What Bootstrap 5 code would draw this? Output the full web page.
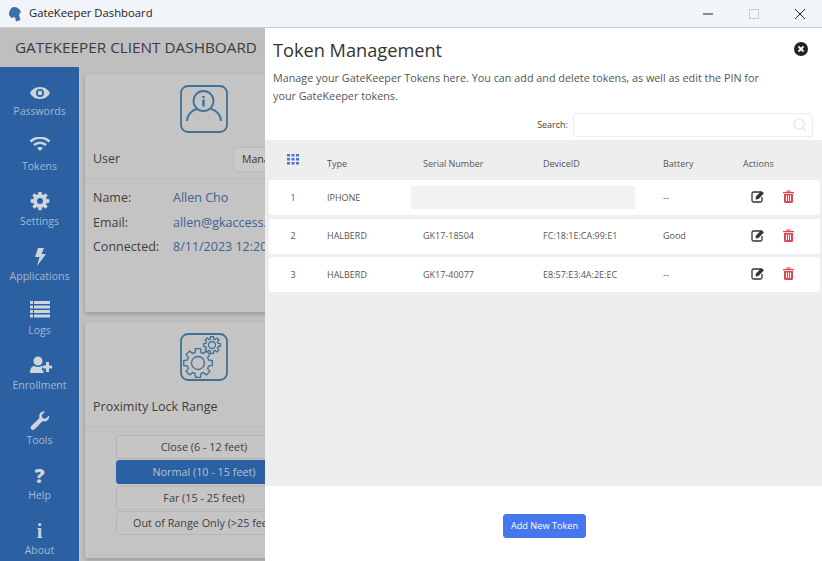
<!DOCTYPE html>
<html lang="en">
<head>
  <meta charset="UTF-8" />
  <meta name="viewport" content="width=device-width, initial-scale=1" />
  <title>GateKeeper Dashboard</title>
  <link href="https://cdn.jsdelivr.net/npm/bootstrap@5.3.3/dist/css/bootstrap.min.css" rel="stylesheet" />
  <style>
    html, body { height: 100%; }
    body {
      overflow: hidden;
      background: #c1c1c1;
      font-family: "Open Sans", "Noto Sans", sans-serif;
      color: #333;
    }
    .win-bar { height: 28px; background: #f1f4f9; border-bottom: 1px solid #c9cbcd; font-size: 11.3px; color: #222; }
    .win-logo { margin: 0 7px 0 8px; }
    .win-btn { width: 46px; position: relative; left: 1px; }
    .app-area { height: 533px; }
    .app-head { height: 39px; padding-left: 15px; font-size: 15.3px; color: #3c3c3c; background: #bfbfbf; }
    .side-menu { width: 79px; background: #2b60a2; }
    .side-item { height: 54.85px; color: #a6b8cf; font-size: 10.5px; line-height: 14px; padding-top: 15px; }
    .side-item svg, .side-glyph { display: block; height: 20px; margin: 0 auto 2px; }
    .side-glyph { color: #ced4db; font-size: 20px; line-height: 20px; font-weight: 800; }
    .glyph-serif { font-family: "Liberation Serif", serif; font-weight: 700; }
    .info-card { width: 238px; background: #c4c4c4; border: 0; border-radius: 2px; box-shadow: 0 2px 5px rgba(0,0,0,.22); }
    .card-one { height: 238px; margin: 7px 0 10px 6px; }
    .card-two { height: 236px; margin-left: 6px; }
    .big-icon { display: block; margin: 11px auto 0; }
    .card-row { padding: 0 8px; height: 38px; font-size: 12.5px; color: #3e3e3e; border-bottom: 1px solid #bcbcbc; }
    .mana-btn { width: 82px; height: 25px; margin-left: auto; background: #c9c9c9; border: 1px solid #bbb; border-radius: 3px; font-size: 10.5px; padding: 4px 8px; color: #333; text-align: left; }
    .facts { padding: 7px 8px 0; font-size: 12.5px; line-height: 24.5px; color: #3e3e3e; }
    .facts span:first-child { display: inline-block; width: 80px; }
    .fact-val { color: #3f6191; white-space: nowrap; }
    .prox-list { width: 176px; margin: 8px 0 0 31px; }
    .prox-opt { height: 24px; margin-bottom: 1.4px; font-size: 10.8px; line-height: 22px; padding: 0; text-align: center; white-space: nowrap; background: #c5c5c5; border: 1px solid #b6b6b6; border-radius: 3px; color: #3e3e3e; }
    .prox-on { background: #2b60a2; border-color: #2b60a2; color: #b4c3d6; }
    .token-panel { top: 0; bottom: 0; left: 265px; right: 0; background: #fff; }
    .panel-title { font-size: 18.2px; line-height: 26px; color: #333; margin: 0; font-weight: 400; }
    .panel-top { padding: 9px 9px 0 8px; }
    .panel-close { margin: 5px 5px 0 0; }
    .panel-desc { margin: 6px 0 0; font-size: 10.8px; line-height: 18px; color: #555; }
    .search-row { height: 24px; margin: 8px 0 3px; font-size: 9px; color: #444; }
    .search-box { width: 240px; height: 24px; margin-left: 5px; border: 1px solid #ececec; border-radius: 3px; padding-right: 5px; }
    .token-area { height: 346px; padding: 0 2px 0 4px; background: #eee; }
    .token-head, .token-row { display: grid; grid-template-columns: 58px 96px 120px 120px 80px 1fr; align-items: center; font-size: 9px; color: #555; }
    .token-head { height: 40px; padding-top: 7px; }
    .head-grid { margin-top: -9px; }
    .token-row { height: 35px; margin-bottom: 3.5px; background: #fff; border-radius: 2px; }
    .col-num { padding-right: 10px; text-align: center; }
    .col-hidden { grid-column: span 2; width: 224px; height: 23px; margin-left: -12px; background: #f2f2f2; }
    .act-gap { gap: 18px; margin: -2px 0 0 8px; }
    .panel-foot { flex: 1; padding: 5px 0 0 2px; }
    .add-btn { width: 83px; height: 24px; padding: 0; font-size: 9.2px; background: #4577ee; border-color: #4577ee; border-radius: 3px; }
  </style>
</head>
<body>
  <!-- window title bar -->
  <div class="win-bar d-flex align-items-center">
    <svg class="win-logo" width="14" height="16" viewBox="0 0 14 16"><path fill="#3d6fa8" d="M6 1c3 0 6 2 7 5l-1 1-1 2 1.500 5-4.500 1.500L7 11 3.500 12 1 9c0-4 2-8 5-8z"/></svg>
    <span>GateKeeper Dashboard</span>
    <div class="ms-auto d-flex align-items-center">
      <div class="win-btn d-flex justify-content-center"><svg width="12" height="12" viewBox="0 0 12 12"><path d="M1 6h10" stroke="#222" fill="none"/></svg></div>
      <div class="win-btn d-flex justify-content-center"><svg width="12" height="12" viewBox="0 0 12 12"><rect x="1.500" y="1.500" width="9" height="9" stroke="#ccc" fill="none"/></svg></div>
      <div class="win-btn d-flex justify-content-center"><svg width="12" height="12" viewBox="0 0 12 12"><path d="M1 1l10 10M11 1L1 11" stroke="#222" fill="none"/></svg></div>
    </div>
  </div>

  <div class="app-area position-relative overflow-hidden">
    <div class="app-head d-flex align-items-center">GATEKEEPER CLIENT DASHBOARD</div>
    <div class="d-flex">
      <nav class="side-menu flex-shrink-0 text-center">
        <div class="side-item">
          <svg width="22" height="20" viewBox="0 -1 22 20"><path fill="#ced4db" d="M11 4C6 4 2.500 7 1 10c1.500 3 5 6 10 6s8.500-3 10-6c-1.500-3-5-6-10-6zm0 10a4 4 0 1 1 0-8 4 4 0 0 1 0 8z"/><circle cx="11" cy="10" r="2.300" fill="#ced4db"/></svg>
          Passwords
        </div>
        <div class="side-item">
          <svg width="22" height="20" viewBox="0 3 22 20"><g fill="none" stroke="#ced4db" stroke-width="2.600"><path d="M1.500 7.500c5.500-5 13.500-5 19 0"/><path d="M5 11c3.500-3 8.500-3 12 0"/></g><path fill="#ced4db" d="M11 17l-3-3c1.700-1.300 4.300-1.300 6 0z"/></svg>
          Tokens
        </div>
        <div class="side-item">
          <svg width="20" height="20" viewBox="0 1 20 20"><path id="sideGear" fill="#ced4db" fill-rule="evenodd" d=""/></svg>
          Settings
        </div>
        <div class="side-item">
          <svg width="14" height="20" viewBox="0 0 14 20"><path fill="#ced4db" d="M5 1h6L8.500 7H13L4 19l2.500-9H2z"/></svg>
          Applications
        </div>
        <div class="side-item">
          <svg width="22" height="20" viewBox="0 2 22 20"><path fill="#ced4db" d="M1 2h3v3H1zm4 0h16v3H5zM1 6.500h3v3H1zm4 0h16v3H5zM1 11h3v3H1zm4 0h16v3H5zM1 15.500h3v3H1zm4 0h16v3H5z"/></svg>
          Logs
        </div>
        <div class="side-item">
          <svg width="24" height="20" viewBox="0 1 24 20"><circle cx="10" cy="6" r="4.500" fill="#ced4db"/><path fill="#ced4db" d="M2 18c0-5 2-7 4.500-7 2 1.200 5 1.200 7 0 1.500 0 2.500.5 3 1.500H14v3h1.500V18z"/><path fill="#ced4db" d="M18 7h3v3.500h3v3h-3V17h-3v-3.500h-3v-3h3z"/></svg>
          Enrollment
        </div>
        <div class="side-item">
          <svg width="20" height="20" viewBox="0 0 20 20"><path fill="#ced4db" d="M19 4.500l-3.500 3.300-3-.8-.8-3L15 .7c-2.800-.9-6 1.300-5.800 4.600 0 .6.100 1.100.3 1.600L1.300 15c-1 1-1 2.400 0 3.300s2.400 1 3.300 0l8.200-8.200c.5.200 1 .3 1.600.3 3.300.2 5.500-3 4.600-5.900z"/></svg>
          Tools
        </div>
        <div class="side-item">
          <span class="side-glyph" aria-hidden="true">?</span>
          Help
        </div>
        <div class="side-item">
          <span class="side-glyph glyph-serif" aria-hidden="true">i</span>
          About
        </div>
      </nav>

      <main class="flex-grow-1">
        <div class="card info-card card-one">
          <svg class="big-icon" width="48" height="48" viewBox="0 0 48 48" fill="none" stroke="#3f7096" stroke-width="1.800">
            <rect x="1" y="1" width="46" height="46" rx="7"/>
            <circle cx="23.500" cy="16" r="10"/>
            <path d="M23.500 11v2M23.500 14.500v7" stroke-width="2.400"/>
            <path d="M7 36c0-6 5-11 10-12M41 36c0-6-5-11-10-12"/>
          </svg>
          <div class="card-row d-flex align-items-center mt-2">User <button class="btn mana-btn">Manage</button></div>
          <div class="facts">
            <div><span>Name:</span><span class="fact-val">Allen Cho</span></div>
            <div><span>Email:</span><span class="fact-val">allen@gkaccess.com</span></div>
            <div><span>Connected:</span><span class="fact-val">8/11/2023 12:20 PM</span></div>
          </div>
        </div>
        <div class="card info-card card-two">
          <svg class="big-icon" width="48" height="48" viewBox="0 0 48 48" fill="none" stroke="#3f7096" stroke-width="1.300">
            <rect x="1" y="1" width="46" height="46" rx="7" stroke-width="1.800"/>
            <path id="gearBig" d=""/><circle cx="18" cy="30" r="6.500"/>
            <path id="gearSmall" d=""/><circle cx="32" cy="12" r="3.500"/>
          </svg>
          <div class="card-row d-flex align-items-center mt-2">Proximity Lock Range</div>
          <div class="prox-list">
            <div class="prox-opt">Close (6 - 12 feet)</div>
            <div class="prox-opt prox-on">Normal (10 - 15 feet)</div>
            <div class="prox-opt">Far (15 - 25 feet)</div>
            <div class="prox-opt">Out of Range Only (&gt;25 feet)</div>
          </div>
        </div>
      </main>
    </div>

    <!-- slide-over panel, sits on top of the dashboard -->
    <aside class="token-panel position-absolute d-flex flex-column">
      <div class="panel-top">
        <div class="d-flex justify-content-between align-items-start">
          <h1 class="panel-title">Token Management</h1>
          <svg class="panel-close" width="14" height="14" viewBox="0 0 14 14"><circle cx="7" cy="7" r="7" fill="#222"/><path d="M4.500 4.500l5 5M9.500 4.500l-5 5" stroke="#fff" stroke-width="1.800"/></svg>
        </div>
        <p class="panel-desc pe-5">Manage your GateKeeper Tokens here. You can add and delete tokens, as well as edit the PIN for your GateKeeper tokens.</p>
        <div class="search-row d-flex align-items-center justify-content-end">
          <span>Search:</span>
          <div class="search-box d-flex align-items-center justify-content-end">
            <svg width="14" height="14" viewBox="0 0 14 14" fill="none" stroke="#e4e4e4" stroke-width="1.200"><circle cx="6" cy="6" r="5"/><path d="M10 10l3 3"/></svg>
          </div>
        </div>
      </div>

      <div class="token-area">
        <div class="token-head">
          <div class="col-num head-grid">
            <svg width="12" height="11" viewBox="0 0 12 11" fill="#4a72d8"><path d="M0 0h3v2.500H0zm4.500 0h3v2.500h-3zM9 0h3v2.500H9zM0 4h3v2.500H0zm4.500 0h3v2.500h-3zM9 4h3v2.500H9zM0 8h3v2.500H0zm4.500 0h3v2.500h-3zM9 8h3v2.500H9z"/></svg>
          </div>
          <div>Type</div><div>Serial Number</div><div>DeviceID</div><div>Battery</div><div>Actions</div>
        </div>
        <div id="tokenRows"></div>
      </div>

      <div class="panel-foot d-flex align-items-center justify-content-center">
        <button class="btn btn-primary add-btn">Add New Token</button>
      </div>
    </aside>
  </div>

  <script>
    const tokens = [
      { type: "IPHONE", serial: "", device: "", battery: "--" },
      { type: "HALBERD", serial: "GK17-18504", device: "FC:18:1E:CA:99:E1", battery: "Good" },
      { type: "HALBERD", serial: "GK17-40077", device: "E8:57:E3:4A:2E:EC", battery: "--" },
    ];

    const editIcon = `<svg width="14" height="13" viewBox="0 0 14 13" fill="none"><path d="M10 2H2.500A1.500 1.500 0 0 0 1 3.500v7A1.500 1.500 0 0 0 2.500 12h7a1.500 1.500 0 0 0 1.500-1.500V7" stroke="#333" stroke-width="1.300"/><path d="M5 6.500L10.500 1 13 3.300 7.500 9l-3 .6z" fill="#333"/></svg>`;
    const trashIcon = `<svg width="11" height="13" viewBox="0 0 11 13" fill="#e8414f"><path d="M3.500 2V.5h4V2H11v1.200H0V2zm1 0h2v-.6h-2z"/><path fill-rule="evenodd" d="M1 4h9v7.500A1.500 1.500 0 0 1 8.500 13h-6A1.500 1.500 0 0 1 1 11.500zm2 1.500V11h1V5.500zm2 0V11h1V5.500zm2 0V11h1V5.500z"/></svg>`;

    document.getElementById("tokenRows").innerHTML = tokens.map((t, i) => `
      <div class="token-row">
        <div class="col-num">${i + 1}</div>
        <div>${t.type}</div>
        ${t.serial ? `<div>${t.serial}</div><div>${t.device}</div>` : `<div class="col-hidden"></div>`}
        <div>${t.battery}</div>
        <div class="d-flex align-items-center act-gap">${editIcon}${trashIcon}</div>
      </div>`).join("");

    // gear outline, shared by the sidebar icon and the big settings icon
    function gearPath(cx, cy, outer, inner, teeth) {
      const pts = [];
      const step = Math.PI * 2 / teeth;
      for (let i = 0; i < teeth; i++) {
        const a = i * step;
        [[-0.32, inner], [-0.2, outer], [0.2, outer], [0.32, inner]].forEach(([k, r]) => {
          const ang = a + k * step * 1.1;
          pts.push((cx + r * Math.cos(ang)).toFixed(2) + " " + (cy + r * Math.sin(ang)).toFixed(2));
        });
      }
      return "M" + pts.join("L") + "Z";
    }
    document.getElementById("gearBig").setAttribute("d", gearPath(18, 30, 14.5, 11, 8));
    document.getElementById("gearSmall").setAttribute("d", gearPath(32, 12, 8.5, 6.3, 8));
    document.getElementById("sideGear").setAttribute("d",
      gearPath(10, 10, 9.5, 7, 8) + "M10 7a3 3 0 1 0 0 6a3 3 0 1 0 0-6Z");
  </script>
  <script src="https://cdn.jsdelivr.net/npm/bootstrap@5.3.3/dist/js/bootstrap.bundle.min.js"></script>
</body>
</html>
